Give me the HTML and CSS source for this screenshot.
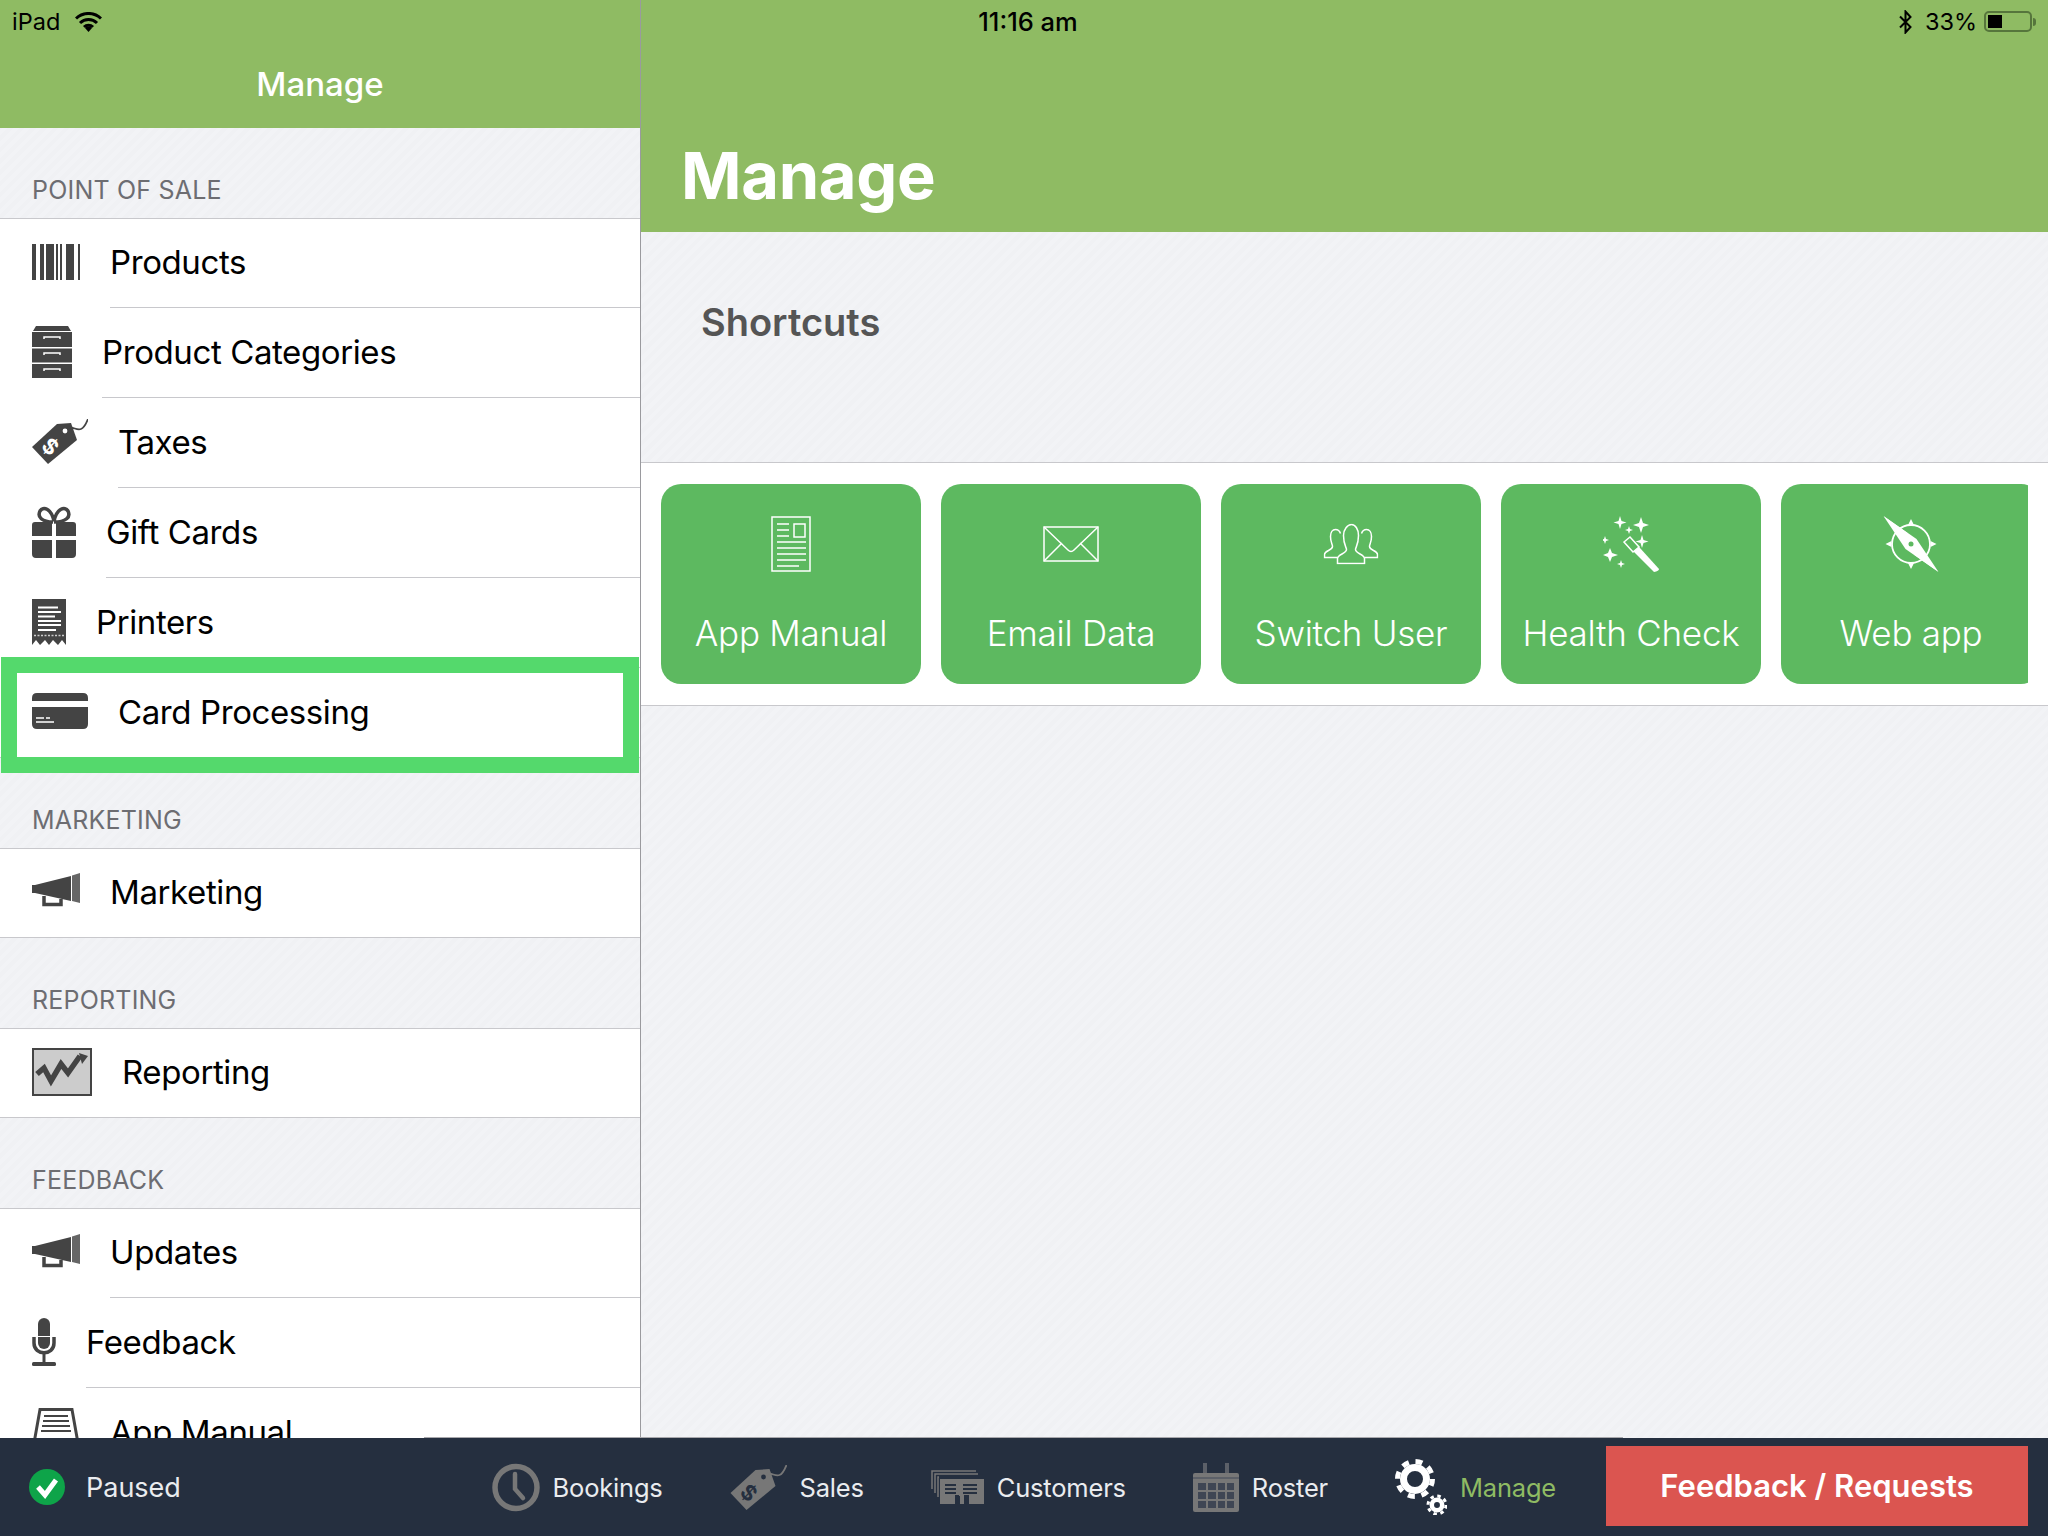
FILE: index.html
```html
<!DOCTYPE html>
<html>
<head>
  <link rel="stylesheet" href="styles.css">
</head>
<body>
  <svg class="sprites" width="0" height="0">
    <symbol id="megaphone" viewBox="0 0 48 34">
      <path d="M0 12h3L39 3v25L3 20H0z" fill="#444"/>
      <path d="M40 2.500L48 0v30l-8-2z" fill="#666"/>
      <path d="M12 23v8.500h17V26" fill="none" stroke="#444" stroke-width="3.500"/>
    </symbol>
  </svg>

  <div class="status-bar">
    <div class="status-left">
      <span>iPad</span>
      <svg width="27" height="20" viewBox="0 0 27 20"><path d="M1 6.500a18 18 0 0 1 25 0M5 11a12 12 0 0 1 17 0M9 15a6.500 6.500 0 0 1 9 0" fill="none" stroke="#000" stroke-width="3"/><path d="M13.500 20l-3.500-4a5 5 0 0 1 7 0z"/></svg>
    </div>
    <div class="status-time">11:16 am</div>
    <div class="status-right">
      <svg width="13" height="24" viewBox="0 0 13 24"><path d="M1 6.500l10.500 10.500-5 5.500V1.500l5 5.500L1 17.500" fill="none" stroke="#000" stroke-width="2"/></svg>
      <span class="battery-pct">33%</span>
      <div class="battery"><div class="battery-fill"></div></div>
      <div class="battery-nub"></div>
    </div>
  </div>

  <div class="screen">
    <div class="sidebar">
      <div class="sidebar-title">Manage</div>

      <div class="section-head">POINT OF SALE</div>
      <div class="list">
        <div class="row">
          <svg width="48" height="36" viewBox="0 0 48 36" fill="#444"><path d="M0 0h4v36H0zM8 0h4v36H8zM14 0h8v36h-8zM24 0h2v36h-2zM28 0h2v36h-2zM34 0h8v36h-8zM46 0h2v36h-2z"/></svg>
          <div class="row-label">Products</div>
        </div>
        <div class="row">
          <svg width="40" height="52" viewBox="0 0 40 52" fill="#444"><path d="M4 0h32l3 5H1zM0 6h40v15H0zM0 22.500h40v14H0zM0 38h40v14H0z"/><path d="M12 13v-2h16v2M12 29v-2h16v2M12 45v-2h16v2" fill="none" stroke="#fff" stroke-width="1.500"/></svg>
          <div class="row-label">Product Categories</div>
        </div>
        <div class="row">
          <svg width="56" height="45" viewBox="0 0 56 45"><path d="M0 28L25 5l14-1 6 17-29 24z" fill="#444"/><circle cx="33" cy="12" r="2.400" fill="#fff"/><text x="18" y="35" transform="rotate(42 18 28)" class="tag-sign">$</text><path d="M35 10c5-4 9 2 14 0 3-1 5-5 7-10" fill="none" stroke="#444" stroke-width="1.800"/></svg>
          <div class="row-label">Taxes</div>
        </div>
        <div class="row">
          <svg width="44" height="52" viewBox="0 0 44 52" fill="#444"><path d="M21 16C10 16 5 11 8 5c3-5 11-3 14 10 3-13 11-15 14-10 3 6-2 11-14 11" fill="none" stroke="#444" stroke-width="3.500"/><path d="M3 16h17v14H0V19q0-3 3-3zM24 16h17q3 0 3 3v11H24zM0 34h20v18H4q-4 0-4-4zM24 34h20v14q0 4-4 4H24z"/></svg>
          <div class="row-label">Gift Cards</div>
        </div>
        <div class="row">
          <svg width="34" height="46" viewBox="0 0 34 46"><path d="M0 0h34v46l-4-5-4 5-5-5-4 5-4-5-5 5-4-5-4 5z" fill="#444"/><path d="M6 8.500h20M6 13h23M6 17.500h17M6 22h23M6 26h23M6 31h18" stroke="#fff" stroke-width="1.800"/><path d="M2 36.500h30" stroke="#ccc" stroke-width="1.500" stroke-dasharray="2 1.500"/></svg>
          <div class="row-label">Printers</div>
        </div>
        <div class="row row-selected">
          <svg width="56" height="36" viewBox="0 0 56 36"><path d="M5 0h46q5 0 5 5v3H0V5q0-5 5-5zM0 14h56v17q0 5-5 5H5q-5 0-5-5z" fill="#444"/><path d="M4 25h8M14 25h4M4 29h18" stroke="#fff" stroke-width="1.500"/></svg>
          <div class="row-label">Card Processing</div>
          <div class="selection-frame"></div>
        </div>
      </div>

      <div class="section-head">MARKETING</div>
      <div class="list">
        <div class="row">
          <svg class="megaphone" width="48" height="34"><use href="#megaphone"/></svg>
          <div class="row-label">Marketing</div>
        </div>
      </div>

      <div class="section-head">REPORTING</div>
      <div class="list">
        <div class="row">
          <svg width="60" height="48" viewBox="0 0 60 48"><rect x="1" y="1" width="58" height="46" fill="#ccc" stroke="#444" stroke-width="2"/><path d="M5 26l7-6 7 13 10-17 7 9 12-17" fill="none" stroke="#444" stroke-width="5.500"/><path d="M47 5l9 3-6 8z" fill="#444"/></svg>
          <div class="row-label">Reporting</div>
        </div>
      </div>

      <div class="section-head">FEEDBACK</div>
      <div class="list">
        <div class="row">
          <svg class="megaphone" width="48" height="34"><use href="#megaphone"/></svg>
          <div class="row-label">Updates</div>
        </div>
        <div class="row">
          <svg width="24" height="48" viewBox="0 0 24 48" fill="#444"><path d="M6 6a6 6 0 0 1 12 0v12H6z"/><path d="M6 19h12v6a6 6 0 0 1-12 0z" fill="#444"/><path d="M2 19v6c0 13 20 13 20 0v-6" fill="none" stroke="#444" stroke-width="3.500"/><path d="M10.500 34h3v10h-3z"/><rect y="44" width="24" height="4" rx="1.500"/></svg>
          <div class="row-label">Feedback</div>
        </div>
        <div class="row row-tray">
          <svg width="48" height="46" viewBox="0 0 48 46"><path d="M8 1.500h32L46.500 38v6h-45v-6z" fill="#fff" stroke="#444" stroke-width="3"/><path d="M12 7h24v2H12zM11 12h26v2H11zM10 17h28v2H10zM9 22h30v2H9z" fill="#444"/><path d="M3 30h12l5 5h8l5-5h12v14H3z" fill="#444"/></svg>
          <div class="row-label">App Manual</div>
        </div>
      </div>
    </div>

    <div class="main">
      <div class="main-header">
        <h1>Manage</h1>
      </div>
      <div class="shortcuts-title">Shortcuts</div>
      <div class="shortcuts">
        <div class="shortcut-row">
          <div class="shortcut">
            <svg width="40" height="56" viewBox="0 0 40 56" fill="none" stroke="#fff" stroke-width="1.500"><rect x="1" y="1" width="38" height="54"/><path d="M6 8h12M6 14h12M6 20h12M6 26h29M6 32h29M6 38h29M6 44h29M6 50h22"/><rect x="23" y="8" width="11" height="13"/></svg>
            <div class="shortcut-label">App Manual</div>
          </div>
          <div class="shortcut">
            <svg width="56" height="36" viewBox="0 0 56 36" fill="none" stroke="#fff" stroke-width="1.500"><rect x="1" y="1" width="54" height="34"/><path d="M1 1l24 23q3 3 6 0L55 1M1 35l18-18M55 35L37 17"/></svg>
            <div class="shortcut-label">Email Data</div>
          </div>
          <div class="shortcut">
            <svg width="55" height="41" viewBox="0 0 55 41" fill="none" stroke="#fff" stroke-width="1.500"><path d="M14 40h27v-5c0-4-9-5-9-9 0-2 3-5 3-14 0-6-3-11-7-11s-8 5-8 11c0 9 3 12 3 14 0 4-9 5-9 9z"/><path d="M14 34H1v-3c0-4 8-4 8-8 0-2-2-4-2-10 0-4 2-7 5-7 2 0 4 1 5 4M41 34h13v-3c0-4-8-4-8-8 0-2 2-4 2-10 0-4-2-7-5-7-2 0-4 1-5 4"/></svg>
            <div class="shortcut-label">Switch User</div>
          </div>
          <div class="shortcut">
            <svg width="56" height="56" viewBox="0 0 56 56"><path d="M17 0l1.500 5 5 1.500-5 1.500-1.500 5-1.500-5-5-1.500 5-1.500zM38 1l2 6 6 2-6 2-2 6-2-6-6-2 6-2zM39 19l1.500 5 5 1.500-5 1.500-1.500 5-1.500-5-5-1.500 5-1.500zM7 32l2 5 6 2-6 2-2 5-2-5-5-2 5-2zM2 20l1 3 3 1-3 1-1 3-1-3-3-1 3-1zM26 10l1 3 3 1-3 1-1 3-1-3-3-1 3-1zM18 44l1 3 3 1-3 1-1 3-1-3-3-1 3-1z" fill="#fff"/><path d="M21 26l6-5 29 32q0 2-5 3z" fill="#fff"/><path d="M21 26l6-5 9 10-6 5z" fill="#5db960" stroke="#fff" stroke-width="1.500"/></svg>
            <div class="shortcut-label">Health Check</div>
          </div>
          <div class="shortcut">
            <svg width="55" height="56" viewBox="0 0 55 56"><circle cx="27.500" cy="28" r="19" fill="none" stroke="#fff" stroke-width="1.800"/><path d="M27.500 3l3 6h-6zM27.500 53l3-6h-6zM2 28l6-3v6zM53 28l-6-3v6z" fill="#fff"/><path d="M0 0l33 23 22 33-33-23z" fill="#fff"/><path d="M0 0l24 17-7 0z M55 56l-24-17 7 0z" fill="#fff"/><circle cx="27.500" cy="28" r="2.500" fill="#5db960"/></svg>
            <div class="shortcut-label">Web app</div>
          </div>
        </div>
      </div>
    </div>
  </div>

  <div class="tabbar">
    <div class="tabbar-line"></div>
    <div class="paused">
      <svg width="36" height="36" viewBox="0 0 36 36"><circle cx="18" cy="18" r="18" fill="#0ea449"/><path d="M9 18l7 8L27 11" fill="none" stroke="#fff" stroke-width="5"/></svg>
      <span>Paused</span>
    </div>
    <div class="tabs">
      <div class="tab">
        <svg width="48" height="49" viewBox="0 0 48 49"><circle cx="24" cy="24.500" r="21" fill="none" stroke="#777" stroke-width="5.500"/><path d="M23 11v15l8 9" fill="none" stroke="#777" stroke-width="4.500" stroke-linecap="round"/></svg>
        <span>Bookings</span>
      </div>
      <div class="tab">
        <svg width="57" height="45" viewBox="0 0 56 45"><path d="M0 28L25 5l14-1 6 17-29 24z" fill="#777"/><circle cx="33" cy="12" r="2.400" fill="#252f3f"/><text x="18" y="35" transform="rotate(42 18 28)" class="tag-sign tag-sign-dark">$</text><path d="M35 10c5-4 9 2 14 0 3-1 5-5 7-10" fill="none" stroke="#777" stroke-width="1.800"/></svg>
        <span>Sales</span>
      </div>
      <div class="tab">
        <svg width="53" height="34" viewBox="0 0 53 34"><path d="M1 19V1h44M4 23V4h43M7 27V7h1" fill="none" stroke="#777" stroke-width="1.500"/><path d="M9 9h44v25H38v-9h-5v9h-4v-9h-5v9H9z" fill="#777"/><path d="M14 15h11M14 19h11M14 23h11M32 15h14M32 19h14M32 23h14" stroke="#252f3f" stroke-width="2"/><path d="M18 25h5M28 25h5" stroke="#777" stroke-width="2"/></svg>
        <span>Customers</span>
      </div>
      <div class="tab">
        <svg width="46" height="49" viewBox="0 0 46 49"><rect y="10" width="46" height="39" rx="2" fill="#777"/><path d="M10 0h4v10h-4zM32 0h4v10h-4z" fill="#5c6068"/><path d="M0 15h46" stroke="#5c6068" stroke-width="2"/><path d="M5 20h8v7H5zM15 20h8v7h-8zM25 20h7v7h-7zM34 20h7v7h-7zM5 29h8v7H5zM15 29h8v7h-8zM25 29h7v7h-7zM34 29h7v7h-7zM5 38h8v7H5zM15 38h8v7h-8zM25 38h7v7h-7zM34 38h7v7h-7z" fill="#3f4654"/></svg>
        <span>Roster</span>
      </div>
      <div class="tab tab-active">
        <svg width="52" height="56" viewBox="0 0 52 56" fill="none" stroke="#fff"><circle cx="20" cy="20" r="11.500" stroke-width="7"/><circle cx="20" cy="20" r="17.500" stroke-width="5" stroke-dasharray="7 6.740"/><circle cx="42" cy="46" r="5.200" stroke-width="4.500"/><circle cx="42" cy="46" r="9" stroke-width="3" stroke-dasharray="3.500 3.570"/></svg>
        <span>Manage</span>
      </div>
    </div>
    <div class="feedback-button">Feedback / Requests</div>
  </div>
</body>
</html>
```

FILE: styles.css
```css
* {
  box-sizing: border-box;
}

body {
  margin: 0;
  width: 2048px;
  height: 1536px;
  overflow: hidden;
  position: relative;
  display: flex;
  flex-direction: column;
  font-family: Inter, "Liberation Sans", sans-serif;
  background: #fff;
}

.sprites {
  position: absolute;
}

.status-bar {
  position: absolute;
  top: 0;
  left: 0;
  right: 0;
  height: 40px;
  z-index: 2;
  font-size: 23.500px;
  color: #000;
}

.status-left {
  position: absolute;
  left: 12px;
  top: 7px;
  display: flex;
  align-items: center;
  gap: 15px;
}

.status-time {
  position: absolute;
  left: 0;
  right: 0;
  top: 6px;
  text-align: center;
  padding-left: 8px;
  font-size: 25.500px;
  font-weight: 500;
}

.status-right {
  position: absolute;
  right: 12px;
  top: 7px;
  display: flex;
  align-items: center;
  gap: 13px;
}

.battery {
  width: 48px;
  height: 21px;
  margin-left: -6px;
  border: 2px solid #56753c;
  border-radius: 5px;
  padding: 2px;
}

.battery-fill {
  width: 14px;
  height: 13px;
  background: #000;
}

.battery-nub {
  width: 3px;
  height: 8px;
  margin-left: -12px;
  background: #56753c;
  border-radius: 0 3px 3px 0;
}

.screen {
  height: 1438px;
  display: flex;
  overflow: hidden;
}

.sidebar,
.main {
  background: repeating-linear-gradient(135deg, #f0f1f4 0 4px, #f2f3f6 4px 8px);
}

.sidebar {
  width: 641px;
  flex-shrink: 0;
  border-right: 1px solid #9a9a9e;
  overflow: hidden;
}

.sidebar-title {
  height: 128px;
  padding-top: 64px;
  background: #8fbb63;
  color: #fff;
  font-size: 33px;
  font-weight: 500;
  line-height: 40px;
  text-align: center;
}

.section-head {
  height: 90px;
  padding: 47px 0 0 32px;
  font-size: 25px;
  line-height: 30px;
  letter-spacing: 0.200px;
  color: #6d6d72;
}

.list {
  background: #fff;
  border-top: 1px solid #c8c8cc;
}

.row {
  position: relative;
  height: 90px;
  padding-left: 32px;
  display: flex;
  align-items: center;
  gap: 30px;
}

.row:first-child {
  height: 89px;
}

.row:last-child {
  border-bottom: 1px solid #c8c8cc;
}

.row svg {
  flex-shrink: 0;
  margin-bottom: 3px;
}

.row svg.megaphone {
  margin-bottom: 6px;
}

.row-label {
  flex: 1;
  height: 100%;
  display: flex;
  align-items: center;
  border-bottom: 1px solid #c8c8cc;
  padding-bottom: 2px;
  font-size: 33px;
  letter-spacing: -0.400px;
  color: #000;
}

.row:last-child .row-label {
  border-bottom: none;
}

.selection-frame {
  position: absolute;
  top: -11px;
  left: 1px;
  right: 1px;
  bottom: -16px;
  border: 16px solid #54d96c;
}

.main {
  flex: 1;
  min-width: 0;
}

.main-header {
  height: 232px;
  background: #8fbb63;
  padding: 136px 0 0 40px;
}

h1 {
  margin: 0;
  font-size: 65px;
  line-height: 80px;
  font-weight: 700;
  letter-spacing: -0.300px;
  color: #fff;
}

.shortcuts-title {
  height: 230px;
  padding: 69px 0 0 60px;
  font-size: 38px;
  line-height: 42px;
  font-weight: 600;
  color: #555;
}

.shortcuts {
  height: 244px;
  background: #fff;
  border-top: 1px solid #c8c8cc;
  border-bottom: 1px solid #c8c8cc;
  padding: 21px 20px 0;
}

.shortcut-row {
  display: flex;
  gap: 20px;
  overflow: hidden;
}

.shortcut {
  width: 260px;
  height: 200px;
  flex-shrink: 0;
  background: #5db960;
  border-radius: 20px;
  position: relative;
  display: flex;
  flex-direction: column;
  align-items: center;
  color: #fff;
}

.shortcut svg {
  position: absolute;
  top: 60px;
  left: 50%;
  transform: translate(-50%, -50%);
}

.shortcut-label {
  margin-top: 124px;
  font-size: 35px;
  line-height: 50px;
  letter-spacing: -0.250px;
  font-weight: 300;
  white-space: nowrap;
}

.tabbar {
  position: relative;
  height: 98px;
  background: #252f3f;
  display: flex;
  align-items: center;
  padding: 0 20px 0 29px;
  color: #eaecef;
}

.tabbar-line {
  position: absolute;
  top: -1px;
  left: 424px;
  width: 1199px;
  height: 1px;
  background: #a8a8ac;
}

.paused {
  display: flex;
  align-items: center;
  gap: 21px;
  font-size: 27px;
}

.tabs {
  margin-left: auto;
  display: flex;
  align-items: center;
  gap: 67px;
  margin-right: 50px;
  font-size: 25.500px;
  letter-spacing: -0.200px;
}

.tab {
  display: flex;
  align-items: center;
  gap: 13px;
}

.tab-active {
  color: #8fbb63;
}

.feedback-button {
  width: 422px;
  height: 80px;
  margin-bottom: 2px;
  padding-bottom: 2px;
  display: flex;
  align-items: center;
  justify-content: center;
  background: #db5550;
  color: #fff;
  font-size: 31px;
  font-weight: 600;
}

.tag-sign {
  font-family: Inter, sans-serif;
  font-size: 21px;
  font-weight: 700;
  text-anchor: middle;
  fill: #fff;
}

.tag-sign-dark {
  fill: #252f3f;
}
```
